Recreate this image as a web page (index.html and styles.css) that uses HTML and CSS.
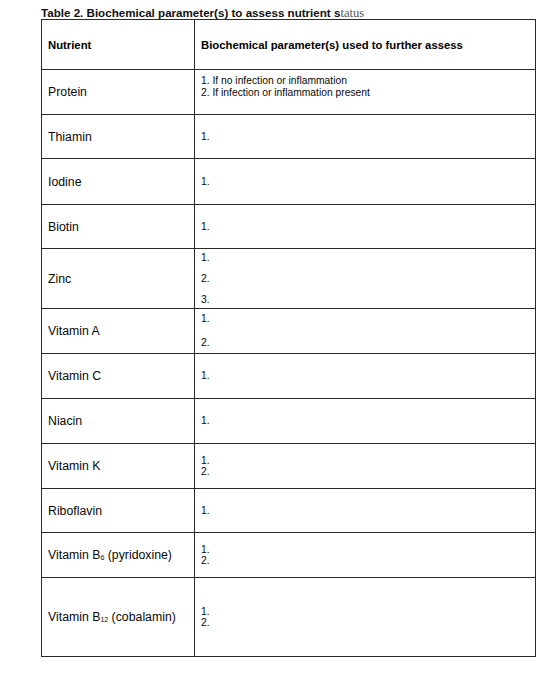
FILE: index.html
```html
<!DOCTYPE html>
<html>
<head>
<meta charset="utf-8">
<link rel="stylesheet" href="styles.css">
</head>
<body>
<div class="page">
  <div class="title">Table 2. Biochemical parameter(s) to assess nutrient s<span class="serif">tatus</span></div>
  <table class="grid">
    <colgroup><col class="c1"><col class="c2"></colgroup>
    <tr class="r-head"><th>Nutrient</th><th>Biochemical parameter(s) used to further assess</th></tr>
    <tr class="r-45"><td>Protein</td><td class="top"><div class="lines"><div>1. If no infection or inflammation</div><div>2. If infection or inflammation present</div></div></td></tr>
    <tr class="r-44"><td>Thiamin</td><td><div class="lines"><div>1.</div></div></td></tr>
    <tr class="r-46"><td>Iodine</td><td><div class="lines"><div>1.</div></div></td></tr>
    <tr class="r-44"><td>Biotin</td><td><div class="lines"><div>1.</div></div></td></tr>
    <tr class="r-60"><td>Zinc</td><td><div class="lines gap9"><div>1.</div><div>2.</div><div>3.</div></div></td></tr>
    <tr class="r-45"><td>Vitamin A</td><td><div class="lines gap12"><div>1.</div><div>2.</div></div></td></tr>
    <tr class="r-45"><td>Vitamin C</td><td><div class="lines"><div>1.</div></div></td></tr>
    <tr class="r-45"><td>Niacin</td><td><div class="lines"><div>1.</div></div></td></tr>
    <tr class="r-45"><td>Vitamin K</td><td><div class="lines"><div>1.</div><div>2.</div></div></td></tr>
    <tr class="r-44"><td>Riboflavin</td><td><div class="lines"><div>1.</div></div></td></tr>
    <tr class="r-45"><td>Vitamin B<sub>6</sub> (pyridoxine)</td><td><div class="lines"><div>1.</div><div>2.</div></div></td></tr>
    <tr class="r-79"><td>Vitamin B<sub>12</sub> (cobalamin)</td><td><div class="lines"><div>1.</div><div>2.</div></div></td></tr>
  </table>
</div>
</body>
</html>
```
FILE: styles.css
```css
html, body {
  margin: 0;
  padding: 0;
  background: #ffffff;
}
body {
  font-family: "Liberation Sans", Arial, sans-serif;
  color: #111111;
}
.page {
  padding: 6px 0 0 41px;
}
.title {
  font-weight: bold;
  font-size: 11.6px;
  line-height: 13px;
  height: 13px;
  white-space: nowrap;
}
.serif {
  font-family: "Liberation Serif", "Times New Roman", serif;
  font-weight: normal;
  color: #555555;
  font-size: 12.5px;
}
.grid {
  border-collapse: collapse;
  table-layout: fixed;
  width: 494px;
}
.c1 { width: 153px; }
.c2 { width: 341px; }
.grid th, .grid td {
  border: 1px solid #2a2a2a;
  padding: 0 6px;
  vertical-align: middle;
  text-align: left;
}
.grid th {
  font-size: 11.3px;
  font-weight: bold;
  color: #000000;
}
.grid td {
  font-size: 12.3px;
  color: #0a0a0a;
}
.grid td sub {
  font-size: 7px;
  vertical-align: baseline;
  position: relative;
  top: 1px;
}
.r-head { height: 50px; }
.r-44 { height: 44px; }
.r-45 { height: 45px; }
.r-46 { height: 46px; }
.r-60 { height: 60px; }
.r-79 { height: 79px; }
.lines {
  display: flex;
  flex-direction: column;
  font-size: 10.3px;
  line-height: 11.5px;
}
.top .lines {
  padding-bottom: 11px;
}
.gap9 { gap: 9.5px; }
.gap12 { gap: 12.5px; }
```
